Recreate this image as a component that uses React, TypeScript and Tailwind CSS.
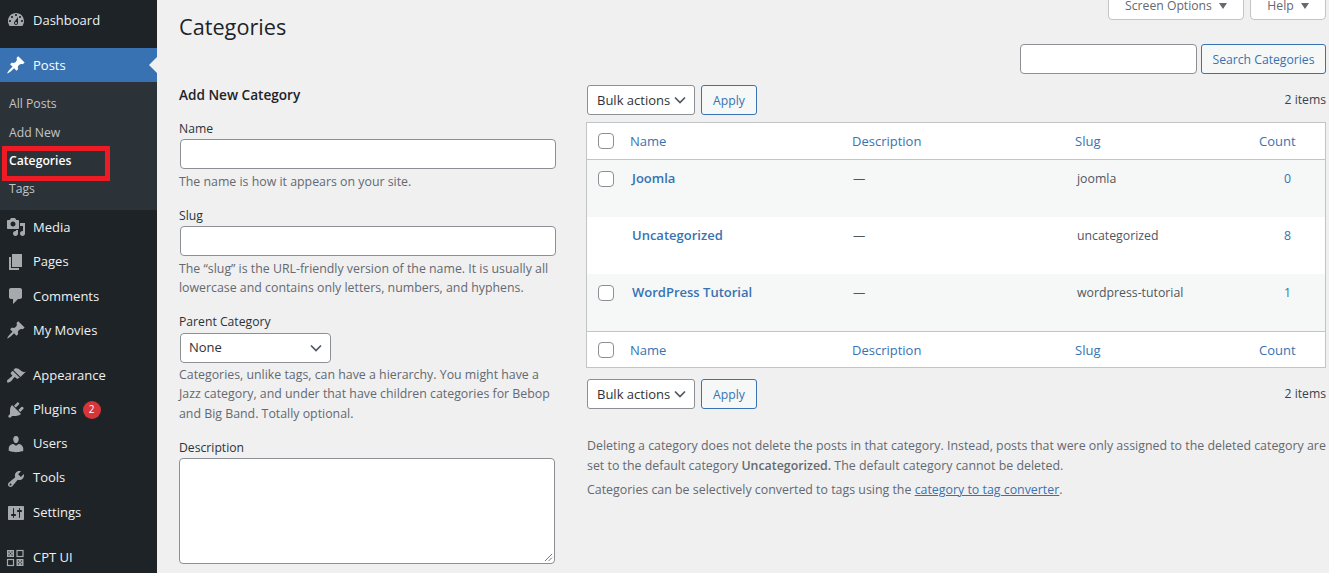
import React from "react";

const P: Record<string, string> = {
  dashboard: "M3.76 16h12.48c1.1-1.37 1.76-3.11 1.76-5 0-4.42-3.58-8-8-8s-8 3.58-8 8c0 1.89.66 3.63 1.76 5zM10 4c.55 0 1 .45 1 1s-.45 1-1 1-1-.45-1-1 .45-1 1-1zM6 6c.55 0 1 .45 1 1s-.45 1-1 1-1-.45-1-1 .45-1 1-1zm8 0c.55 0 1 .45 1 1s-.45 1-1 1-1-.45-1-1 .45-1 1-1zm-5.37 5.55L12 7v6c0 1.1-.9 2-2 2s-2-.9-2-2c0-.57.24-1.08.63-1.45zM4 10c.55 0 1 .45 1 1s-.45 1-1 1-1-.45-1-1 .45-1 1-1zm12 0c.55 0 1 .45 1 1s-.45 1-1 1-1-.45-1-1 .45-1 1-1zm-5 3c0-.55-.45-1-1-1s-1 .45-1 1 .45 1 1 1 1-.45 1-1z",
  post: "M10.44 3.02l1.82-1.82 6.36 6.35-1.83 1.82c-1.05-.68-2.48-.57-3.41.36l-.75.75c-.92.93-1.04 2.35-.35 3.41l-1.83 1.82-2.41-2.41-2.8 2.79c-.42.42-3.38 2.71-3.8 2.29s1.86-3.39 2.28-3.81l2.79-2.79L4.1 9.36l1.83-1.82c1.05.69 2.48.57 3.4-.36l.75-.75c.93-.92 1.05-2.35.36-3.41z",
  media: "M13 11V4c0-.55-.45-1-1-1h-1.67L9 1H5L3.67 3H2c-.55 0-1 .45-1 1v7c0 .55.45 1 1 1h10c.55 0 1-.45 1-1zM7 4.5c1.38 0 2.5 1.12 2.5 2.5S8.38 9.5 7 9.5 4.5 8.38 4.5 7 5.62 4.5 7 4.5zM14 6h5v10.5c0 1.38-1.12 2.5-2.5 2.5S14 17.88 14 16.5s1.12-2.5 2.5-2.5c.17 0 .34.02.5.05V9h-3V6zm-4 8.05V13h2v3.5c0 1.38-1.12 2.5-2.5 2.5S7 17.88 7 16.5 8.12 14 9.5 14c.17 0 .34.02.5.05z",
  page: "M6 15V2h10v13H6zm-1 1h8v2H3V5h2v11z",
  comments: "M5 2h9c1.1 0 2 .9 2 2v7c0 1.1-.9 2-2 2h-2l-5 5v-5H5c-1.1 0-2-.9-2-2V4c0-1.1.9-2 2-2z",
  appearance: "M14.48 11.06L7.41 3.99l1.5-1.5c.5-.56 2.3-.47 3.51.32 1.21.8 1.43 1.28 2.91 2.1 1.18.64 2.45 1.26 4.45.85zm-.71.71L6.7 4.7 4.93 6.47c-.39.39-.39 1.02 0 1.41l1.06 1.06c.39.39.39 1.03 0 1.42-.6.6-1.43 1.11-2.21 1.69-.35.26-.7.53-1.01.84C1.43 13.23.4 15.43 1.2 16.23c.8.8 3-.23 4.34-1.57.31-.31.58-.66.84-1.01.58-.78 1.09-1.61 1.69-2.21.39-.39 1.03-.39 1.42 0l1.06 1.06c.39.39 1.02.39 1.41 0z",
  plugins: "M13.11 4.36L9.87 7.6 8 5.73l3.24-3.24c.35-.34 1.05-.2 1.56.32.52.51.66 1.21.31 1.55zm-8 1.77l.91-1.12 9.01 9.01-1.19.84c-.71.71-2.63 1.16-3.82 1.16H6.14L4.9 17.26c-.59.59-1.54.59-2.12 0-.59-.58-.59-1.53 0-2.12l1.24-1.24v-3.88c0-1.13.4-3.19 1.09-3.89zm7.26 3.97l3.24-3.24c.34-.35 1.04-.21 1.55.31.52.51.66 1.21.31 1.55l-3.24 3.25z",
  users: "M10 9.25c-2.27 0-2.73-3.44-2.73-3.44C7 4.02 7.82 2 9.97 2c2.16 0 2.98 2.02 2.71 3.81 0 0-.41 3.44-2.68 3.44zm0 2.57L12.72 10c2.39 0 4.52 2.33 4.52 4.53v2.49s-3.65 1.13-7.24 1.13c-3.65 0-7.24-1.13-7.24-1.13v-2.49c0-2.25 1.94-4.48 4.47-4.48z",
  tools: "M16.68 9.77c-1.34 1.34-3.3 1.67-4.95.99l-5.41 6.52c-.99.99-2.59.99-3.58 0s-.99-2.59 0-3.57l6.52-5.42c-.68-1.65-.35-3.61.99-4.95 1.28-1.28 3.12-1.62 4.72-1.06l-2.89 2.89 2.82 2.82 2.86-2.87c.53 1.58.18 3.39-1.08 4.65zM3.81 16.21c.4.39 1.04.39 1.43 0 .4-.4.4-1.04 0-1.43-.39-.4-1.03-.4-1.43 0-.39.39-.39 1.03 0 1.43z",
  settings: "M18 16V4c0-.55-.45-1-1-1H3c-.55 0-1 .45-1 1v12c0 .55.45 1 1 1h14c.55 0 1-.45 1-1zM8 11h1c.55 0 1 .45 1 1s-.45 1-1 1H8v1.5c0 .28-.22.5-.5.5s-.5-.22-.5-.5V13H6c-.55 0-1-.45-1-1s.45-1 1-1h1V5.5c0-.28.22-.5.5-.5s.5.22.5.5V11zm5-2h-1c-.55 0-1-.45-1-1s.45-1 1-1h1V5.5c0-.28.22-.5.5-.5s.5.22.5.5V7h1c.55 0 1 .45 1 1s-.45 1-1 1h-1v5.5c0 .28-.22.5-.5.5s-.5-.22-.5-.5V9z",
};

function Icon({ d, white }: { d: string; white?: boolean }) {
  return (
    <svg viewBox="0 0 20 20" className={white ? "w-5 h-5 shrink-0 fill-white" : "w-5 h-5 shrink-0 fill-[#a7aaad]"}>
      <path d={d} />
    </svg>
  );
}

function CptIcon() {
  return (
    <svg viewBox="0 0 20 20" className="w-5 h-5 shrink-0">
      <rect x="1" y="2" width="7" height="7" fill="#a7aaad" />
      <rect x="11" y="2.5" width="6" height="6" fill="none" stroke="#a7aaad" strokeWidth="1.2" />
      <rect x="1.5" y="11.5" width="6" height="6" fill="none" stroke="#a7aaad" strokeWidth="1.2" />
      <rect x="10.5" y="11" width="7" height="7" fill="#a7aaad" />
      <circle cx="3" cy="4" r=".7" fill="#1d2327" />
      <circle cx="6" cy="4" r=".7" fill="#1d2327" />
      <circle cx="4.5" cy="5.5" r=".7" fill="#1d2327" />
      <circle cx="3" cy="7" r=".7" fill="#1d2327" />
      <circle cx="6" cy="7" r=".7" fill="#1d2327" />
      <circle cx="12.5" cy="13" r=".7" fill="#1d2327" />
      <circle cx="15.5" cy="13" r=".7" fill="#1d2327" />
      <circle cx="14" cy="14.5" r=".7" fill="#1d2327" />
      <circle cx="12.5" cy="16" r=".7" fill="#1d2327" />
      <circle cx="15.5" cy="16" r=".7" fill="#1d2327" />
    </svg>
  );
}

function MenuItem({ icon, label, badge, gap, shift }: { icon?: string; label: string; badge?: string; gap?: boolean; shift?: string }) {
  return (
    <div className={gap ? "mt-[11px] h-[34.3px] flex items-center pl-[6px] text-[13px] text-[#f0f0f1]" : "h-[34.3px] flex items-center pl-[6px] text-[13px] text-[#f0f0f1]"}>
      {icon ? <Icon d={icon} /> : <CptIcon />}
      <span className={"ml-[7px] " + (shift ?? "")}>{label}</span>
      {badge && (
        <span className="ml-[6px] w-[18px] h-[18px] rounded-full bg-[#d63638] text-white text-[10px] flex items-center justify-center">
          {badge}
        </span>
      )}
    </div>
  );
}

function Chevron() {
  return (
    <svg viewBox="0 0 16 16" className="w-4 h-4 shrink-0" fill="none" stroke="#50575e" strokeWidth="1.7">
      <path d="M3 5.5l5 5 5-5" />
    </svg>
  );
}

function Tablenav() {
  return (
    <div className="flex items-center h-[30px]">
      <div className="w-[108px] h-[30px] bg-white border border-[#8c8f94] rounded-[3px] flex items-center justify-between pl-[9px] pr-[6px] text-[13px] text-[#2c3338]">
        <span className="pt-[2px]">Bulk actions</span>
        <Chevron />
      </div>
      <div className="ml-[6px] w-[56px] h-[30px] pt-[2px] bg-[#f6f7f7] border border-[#3872b2] rounded-[3px] flex items-center justify-center text-[12.2px] text-[#3872b2]">
        Apply
      </div>
      <div className="ml-auto text-[12.2px] text-[#3c434a]">2 items</div>
    </div>
  );
}

function Check() {
  return <div className="w-4 h-4 bg-white border border-[#8c8f94] rounded-[4px]" />;
}

const cols = "grid grid-cols-[43px_222px_223px_184px_1fr] text-[13px] text-[#3872b2]";

function HeadRow({ className }: { className: string }) {
  return (
    <div className={cols + " " + className}>
      <div className="pl-[11px] pt-[10px]"><Check /></div>
      <div className="pt-[8px] leading-5">Name</div>
      <div className="pt-[8px] leading-5">Description</div>
      <div className="pt-[8px] leading-5">Slug</div>
      <div className="pt-[8px] leading-5">Count</div>
    </div>
  );
}

function Row({ name, slug, count, check, bg }: { name: string; slug: string; count: string; check: boolean; bg: string }) {
  return (
    <div className={"grid grid-cols-[43px_222px_223px_184px_1fr] h-[57px] text-[12.3px] " + bg}>
      <div className="pl-[11px] pt-[11px]">{check && <Check />}</div>
      <div className="pt-[8px] pl-[2px] leading-5 text-[13px] font-semibold text-[#3872b2]">{name}</div>
      <div className="pt-[9px] pl-[1px] leading-5 text-[#50575e]">—</div>
      <div className="pt-[9px] pl-[2px] leading-5 text-[#50575e]">{slug}</div>
      <div className="pt-[9px] pl-[25px] leading-5 text-[#3872b2]">{count}</div>
    </div>
  );
}

function Label({ children, className }: { children: React.ReactNode; className: string }) {
  return <div className={"h-[18px] leading-[18px] text-[12.2px] text-[#2c3338] " + className}>{children}</div>;
}

function Help({ children, className }: { children: React.ReactNode; className: string }) {
  return <p className={"text-[12.35px] text-[#646970] " + className}>{children}</p>;
}

export default function App() {
  return (
    <div className="relative flex h-[573px] overflow-hidden bg-[#f0f0f1] font-['Open_Sans',sans-serif]">
      <aside className="w-[157px] shrink-0 bg-[#1d2327] pt-[3px]">
        <MenuItem icon={P.dashboard} label="Dashboard" shift="pt-[2px]" />
        <div className="relative mt-[11px] h-[34px] bg-[#3872b2] flex items-center pl-[6px] text-[13px] text-white">
          <Icon d={P.post} white />
          <span className="ml-[7px]">Posts</span>
          <div className="absolute right-0 top-[9px] w-0 h-0 border-y-[8px] border-y-transparent border-r-[8px] border-r-[#f0f0f1]" />
        </div>
        <div className="relative h-[128px] bg-[#2c3338] pt-[8px] pl-[9px] text-[12.2px] text-[#c3c4c7]">
          <div className="h-[28.4px] leading-[28.4px]">All Posts</div>
          <div className="h-[28.4px] leading-[28.4px]">Add New</div>
          <div className="h-[28.4px] leading-[28.4px] font-semibold text-white">Categories</div>
          <div className="h-[28.4px] leading-[28.4px]">Tags</div>
          <div className="absolute left-[2px] top-[64px] w-[108px] h-[35px] border-[5px] border-[#ed1c24]" />
        </div>
        <MenuItem icon={P.media} label="Media" />
        <MenuItem icon={P.page} label="Pages" />
        <MenuItem icon={P.comments} label="Comments" shift="pt-[2px]" />
        <MenuItem icon={P.post} label="My Movies" />
        <MenuItem icon={P.appearance} label="Appearance" gap />
        <MenuItem icon={P.plugins} label="Plugins" badge="2" />
        <MenuItem icon={P.users} label="Users" />
        <MenuItem icon={P.tools} label="Tools" shift="pb-[2px]" />
        <MenuItem icon={P.settings} label="Settings" />
        <MenuItem label="CPT UI" gap />
      </aside>

      <main className="flex-1 min-w-0 pl-[22px] pr-[3px]">
        <div className="flex items-start justify-between h-[44px]">
          <h1 className="mt-[11px] text-[21.7px] leading-[32px] text-[#1d2327]">Categories</h1>
          <div className="flex gap-[6px] -mt-[8px] text-[12.2px] text-[#646970]">
            <div className="w-[136px] h-[28px] bg-white border border-[#c3c4c7] rounded-b-[4px] flex items-center justify-center gap-[7px]">
              Screen Options <span className="w-0 h-0 border-x-[4px] border-x-transparent border-t-[6px] border-t-[#646970]" />
            </div>
            <div className="w-[76px] h-[28px] bg-white border border-[#c3c4c7] rounded-b-[4px] flex items-center justify-center gap-[7px]">
              Help <span className="w-0 h-0 border-x-[4px] border-x-transparent border-t-[6px] border-t-[#646970]" />
            </div>
          </div>
        </div>
        <div className="flex justify-end gap-[4px] h-[30px]">
          <div className="w-[177px] bg-white border border-[#8c8f94] rounded-[4px]" />
          <div className="w-[125px] pt-[2px] bg-[#f6f7f7] border border-[#3872b2] rounded-[3px] flex items-center justify-center text-[12.2px] text-[#3872b2]">
            Search Categories
          </div>
        </div>

        <div className="flex gap-[31px]">
          <section className="w-[377px] shrink-0">
            <h2 className="mt-[11px] h-5 leading-5 text-[13.6px] font-semibold text-[#1d2327]">Add New Category</h2>
            <Label className="mt-[15px]">Name</Label>
            <div className="mt-[1px] ml-[1px] h-[30px] bg-white border border-[#8c8f94] rounded-[4px]" />
            <Help className="mt-[3px] leading-[19px]">The name is how it appears on your site.</Help>
            <Label className="mt-[16px]">Slug</Label>
            <div className="mt-[1px] ml-[1px] h-[30px] bg-white border border-[#8c8f94] rounded-[4px]" />
            <Help className="mt-[3px] leading-[19px]">The “slug” is the URL-friendly version of the name. It is usually all lowercase and contains only letters, numbers, and hyphens.</Help>
            <Label className="mt-[16px]">Parent Category</Label>
            <div className="mt-[2px] ml-[1px] w-[151px] h-[30px] bg-white border border-[#8c8f94] rounded-[4px] flex items-center justify-between pl-[8px] pr-[6px] text-[13px] text-[#2c3338]">
              <span>None</span>
              <Chevron />
            </div>
            <Help className="mt-[2px] leading-[19.4px]">Categories, unlike tags, can have a hierarchy. You might have a Jazz category, and under that have children categories for Bebop and Big Band. Totally optional.</Help>
            <Label className="mt-[16px]">Description</Label>
            <div className="relative mt-[1px] w-[376px] h-[106px] bg-white border border-[#8c8f94] rounded-[4px]">
              <svg viewBox="0 0 10 10" className="absolute right-[1px] bottom-[1px] w-[9px] h-[9px]" stroke="#646970" strokeWidth="1">
                <path d="M1 9L9 1M5 9l4-4" />
              </svg>
            </div>
          </section>

          <section className="flex-1 min-w-0 pt-[11px]">
            <Tablenav />
            <div className="mt-[7px] -ml-[1px] bg-white border border-[#c3c4c7]">
              <HeadRow className="h-[37px] border-b border-[#c3c4c7]" />
              <Row name="Joomla" slug="joomla" count="0" check bg="bg-[#f6f7f7]" />
              <Row name="Uncategorized" slug="uncategorized" count="8" check={false} bg="bg-white" />
              <Row name="WordPress Tutorial" slug="wordpress-tutorial" count="1" check bg="bg-[#f6f7f7]" />
              <HeadRow className="h-[36px] border-t border-[#c3c4c7]" />
            </div>
            <div className="mt-[11px]"><Tablenav /></div>
            <p className="mt-[27px] leading-[19.5px] text-[12.38px] text-[#646970]">
              Deleting a category does not delete the posts in that category. Instead, posts that were only assigned to the deleted category are set to the default category <b className="font-semibold">Uncategorized.</b> The default category cannot be deleted.
            </p>
            <p className="mt-[5px] leading-[19.5px] text-[12.38px] text-[#646970]">
              Categories can be selectively converted to tags using the <span className="underline text-[#3872b2]">category to tag converter</span>.
            </p>
          </section>
        </div>
      </main>
    </div>
  );
}
